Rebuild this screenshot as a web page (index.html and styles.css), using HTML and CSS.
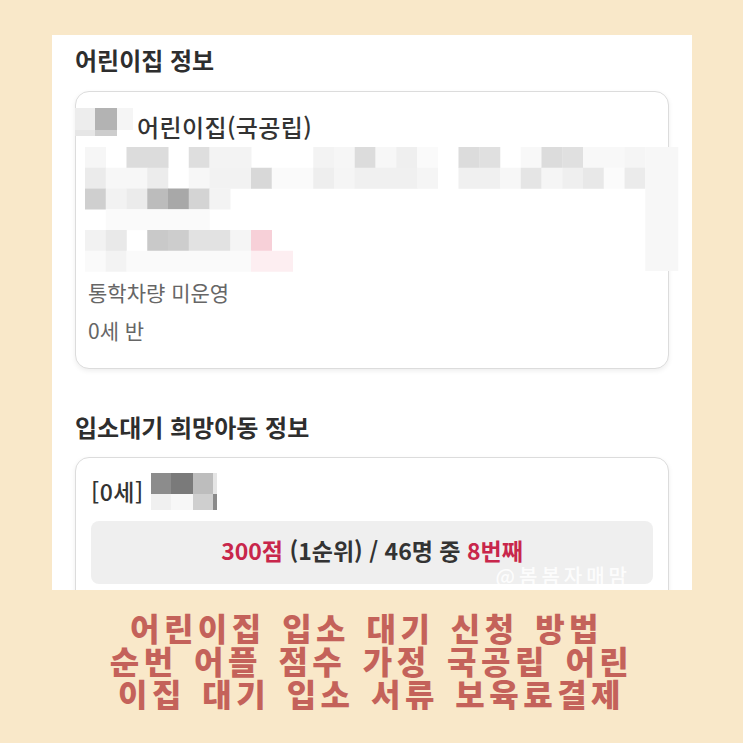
FILE: index.html
```html
<!DOCTYPE html>
<html lang="ko">
<head>
  <meta charset="UTF-8">
  <title>어린이집 입소 대기 신청 방법</title>
  <link rel="stylesheet" href="styles.css">
</head>
<body>
  <div class="shot">
    <h2 class="head">어린이집 정보</h2>

    <div class="card card-info">
      <div class="name-row">
        <svg class="blur-name" width="60" height="28" viewBox="0 0 60 28">
          <rect x="0" y="0" width="20" height="22" fill="#ededed"/>
          <rect x="20" y="0" width="22" height="22" fill="#b3b3b3"/>
          <rect x="42" y="0" width="16" height="22" fill="#f5f5f5"/>
          <rect x="0" y="22" width="20" height="6" fill="#e6e6e6"/>
          <rect x="20" y="22" width="22" height="6" fill="#cdcdcd"/>
        </svg>
        <span class="name">어린이집(국공립)</span>
      </div>

      <!-- 주소/전화 모자이크 -->
      <svg class="mosaic" width="593" height="124" viewBox="0 0 593 124">
        <g>
          <rect x="0" y="0" width="21" height="21" fill="#f6f6f6"/>
          <rect x="41.5" y="0" width="42" height="21" fill="#dcdcdc"/>
          <rect x="103.75" y="0" width="21" height="21" fill="#dedede"/>
          <rect x="124.5" y="0" width="42" height="21" fill="#f3f3f3"/>
          <rect x="228.25" y="0" width="21" height="21" fill="#f3f3f3"/>
          <rect x="249" y="0" width="21" height="21" fill="#f6f6f6"/>
          <rect x="269.75" y="0" width="21" height="21" fill="#dcdcdc"/>
          <rect x="290.5" y="0" width="21" height="21" fill="#f7f7f7"/>
          <rect x="311.25" y="0" width="21" height="21" fill="#efefef"/>
          <rect x="332" y="0" width="21" height="21" fill="#fafafa"/>
          <rect x="373.5" y="0" width="21" height="21" fill="#dcdcdc"/>
          <rect x="394.25" y="0" width="21" height="21" fill="#e0e0e0"/>
          <rect x="435.75" y="0" width="21" height="21" fill="#f8f8f8"/>
          <rect x="456.5" y="0" width="21" height="21" fill="#dcdcdc"/>
          <rect x="477.25" y="0" width="21" height="21" fill="#e0e0e0"/>
          <rect x="498" y="0" width="42" height="21" fill="#f8f8f8"/>
          <rect x="539.5" y="0" width="21" height="21" fill="#f5f5f5"/>
        </g>
        <g>
          <rect x="0" y="20.75" width="21" height="21" fill="#ebebeb"/>
          <rect x="20.75" y="20.75" width="42" height="21" fill="#f7f7f7"/>
          <rect x="62.25" y="20.75" width="21" height="21" fill="#ececec"/>
          <rect x="103.75" y="20.75" width="21" height="21" fill="#f7f7f7"/>
          <rect x="124.5" y="20.75" width="42" height="21" fill="#f2f2f2"/>
          <rect x="166" y="20.75" width="21" height="21" fill="#d8d8d8"/>
          <rect x="186.75" y="20.75" width="42" height="21" fill="#fafafa"/>
          <rect x="228.25" y="20.75" width="21" height="21" fill="#eeeeee"/>
          <rect x="249" y="20.75" width="21" height="21" fill="#f5f5f5"/>
          <rect x="269.75" y="20.75" width="63" height="21" fill="#f0f0f0"/>
          <rect x="332" y="20.75" width="21" height="21" fill="#f5f5f5"/>
          <rect x="373.5" y="20.75" width="42" height="21" fill="#f0f0f0"/>
          <rect x="415" y="20.75" width="21" height="21" fill="#f7f7f7"/>
          <rect x="435.75" y="20.75" width="21" height="21" fill="#e5e5e5"/>
          <rect x="456.5" y="20.75" width="21" height="21" fill="#f5f5f5"/>
          <rect x="477.25" y="20.75" width="21" height="21" fill="#efefef"/>
          <rect x="498" y="20.75" width="21" height="21" fill="#e8e8e8"/>
          <rect x="518.75" y="20.75" width="21" height="21" fill="#fbfbfb"/>
          <rect x="539.5" y="20.75" width="21" height="21" fill="#ebebeb"/>
        </g>
        <g>
          <rect x="0" y="41.5" width="21" height="21" fill="#cfcfcf"/>
          <rect x="20.75" y="41.5" width="21" height="21" fill="#f2f2f2"/>
          <rect x="41.5" y="41.5" width="21" height="21" fill="#ebebeb"/>
          <rect x="62.25" y="41.5" width="21" height="21" fill="#bcbcbc"/>
          <rect x="83" y="41.5" width="21" height="21" fill="#a8a8a8"/>
          <rect x="103.75" y="41.5" width="21" height="21" fill="#d4d4d4"/>
          <rect x="124.5" y="41.5" width="21" height="21" fill="#f3f3f3"/>
        </g>
        <g>
          <rect x="20.75" y="62.25" width="104" height="21" fill="#fafafa"/>
        </g>
        <g>
          <rect x="0" y="83" width="21" height="21" fill="#f2f2f2"/>
          <rect x="20.75" y="83" width="21" height="21" fill="#e9e9e9"/>
          <rect x="62.25" y="83" width="21" height="21" fill="#c9c9c9"/>
          <rect x="83" y="83" width="21" height="21" fill="#cdcdcd"/>
          <rect x="103.75" y="83" width="42" height="21" fill="#e2e2e2"/>
          <rect x="145.25" y="83" width="21" height="21" fill="#f5f5f5"/>
          <rect x="166" y="83" width="21" height="21" fill="#f7d0d8"/>
        </g>
        <g>
          <rect x="0" y="103.75" width="21" height="21" fill="#fafafa"/>
          <rect x="20.75" y="103.75" width="21" height="21" fill="#f3f3f3"/>
          <rect x="41.5" y="103.75" width="125" height="21" fill="#fafafa"/>
          <rect x="166" y="103.75" width="42" height="21" fill="#fdeef1"/>
        </g>
        <rect x="560.25" y="0" width="33" height="124" fill="#f7f7f7"/>
      </svg>

      <p class="line">통학차량 미운영</p>
      <p class="line">0세 반</p>
    </div>

    <h2 class="head head-second">입소대기 희망아동 정보</h2>

    <div class="card card-wait">
      <div class="child-row">
        <span class="child">[0세]</span>
        <svg class="blur-child" width="68" height="37" viewBox="0 0 68 37">
          <rect x="0" y="0" width="20" height="21" fill="#8c8c8c"/>
          <rect x="20" y="0" width="22" height="21" fill="#7a7a7a"/>
          <rect x="42" y="0" width="20" height="21" fill="#bdbdbd"/>
          <rect x="62" y="0" width="4" height="21" fill="#e5e5e5"/>
          <rect x="0" y="21" width="20" height="16" fill="#f0f0f0"/>
          <rect x="20" y="21" width="22" height="16" fill="#f7f7f7"/>
          <rect x="42" y="21" width="20" height="16" fill="#cfcfcf"/>
          <rect x="62" y="21" width="4" height="16" fill="#8a8a8a"/>
        </svg>
      </div>
      <div class="score">
        <span class="red">300점</span> (1순위) / 46명 중 <span class="red">8번째</span>
        <span class="mark">@봄봄자매맘</span>
      </div>
    </div>
  </div>

  <div class="title">
    <div class="title-line first">어린이집 입소 대기 신청 방법</div>
    <div class="title-line">순번 어플 점수 가정 국공립 어린</div>
    <div class="title-line">이집 대기 입소 서류 보육료결제</div>
  </div>
</body>
</html>
```

FILE: styles.css
```css
body {
  margin: 0;
  background: #f9e8c9;
  font-family: "Noto Sans CJK KR", "Noto Sans", sans-serif;
}

.shot {
  width: 640px; height: 555px;
  margin: 35px 0 0 52px;
  padding: 11px 23px 0 23px;
  box-sizing: border-box;
  background: #fff;
  overflow: hidden;
}

.head {
  margin: 0;
  font-size: 24px; line-height: 28px;
  font-weight: 700;
  color: #2e2e2e;
}
.head-second { margin-top: 44px; }

.card {
  margin-top: 17px;
  border: 1px solid #dcdcdc;
  border-radius: 14px;
  box-shadow: 0 2px 5px rgba(0,0,0,.07);
  background: #fff;
}
.card-info { padding: 21px 0 25px 12px; }
.card-wait { margin-top: 16px; padding: 19px 15px 20px 15px; }

.name-row { display: flex; align-items: flex-start; margin-left: -13px; height: 28px; }
.blur-name { display: block; margin-top: -5px; }
.name { font-size: 24px; line-height: 28px; font-weight: 500; color: #333; margin-left: 2px; letter-spacing: .4px; }

.mosaic { display: block; margin: 6px 0 0 -3px; overflow: visible; }

.line {
  margin: 8px 0 0 0;
  font-size: 21px; line-height: 26px;
  color: #666;
}
.line + .line { margin-top: 12px; }

.child-row { display: flex; align-items: flex-start; height: 28px; }
.child { font-size: 23px; line-height: 28px; font-weight: 500; color: #333; letter-spacing: .5px; }
.blur-child { display: block; margin: -4px 0 0 7px; }

.score {
  position: relative;
  margin-top: 16px;
  height: 63px;
  padding-top: 16px;
  box-sizing: border-box;
  background: #efefef;
  border-radius: 8px;
  text-align: center;
  font-size: 23px; line-height: 26px;
  font-weight: 600;
  color: #333;
}
.red { color: #c8264b; }
.mark {
  position: absolute; right: 22px; top: 42px;
  font-size: 20px; line-height: 26px;
  font-weight: 500;
  letter-spacing: 4px;
  color: rgba(255,255,255,.85);
}

.title {
  padding-top: 21px;
  text-align: center;
  color: #c4625a;
  font-size: 32px; line-height: 33px;
  font-weight: 900;
  letter-spacing: 4.5px;
  word-spacing: 3px;
}
.first { padding-right: 10px; }
```
